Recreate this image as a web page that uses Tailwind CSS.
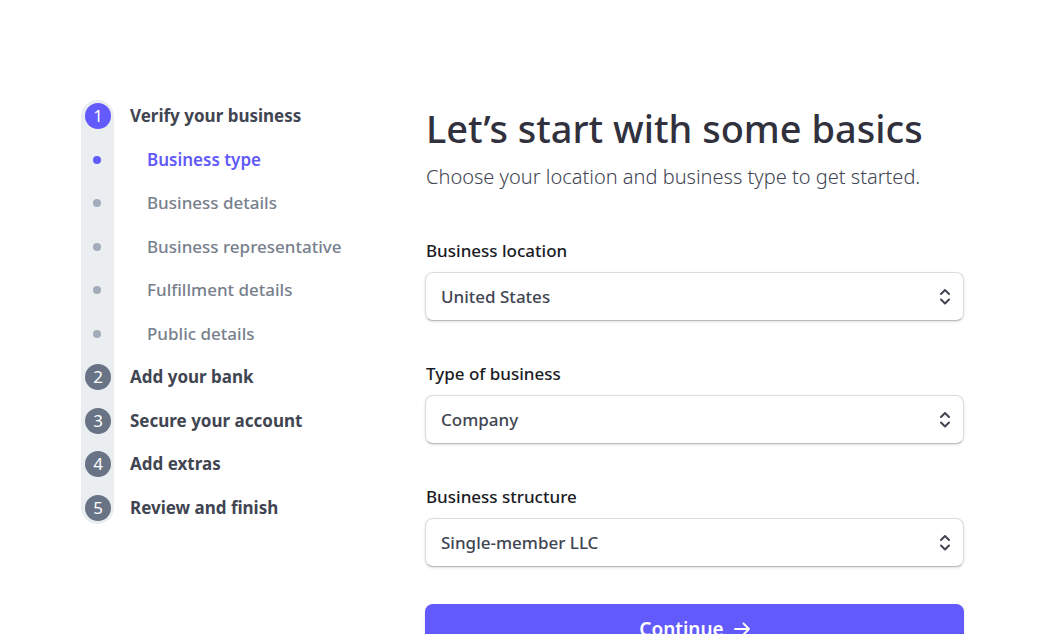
<!DOCTYPE html>
<html lang="en">
<head>
<meta charset="utf-8">
<meta name="viewport" content="width=device-width, initial-scale=1">
<title>Let’s start with some basics</title>
<script src="https://cdn.jsdelivr.net/npm/@tailwindcss/browser@4"></script>
</head>
<body class="bg-white font-['Noto_Sans',sans-serif] text-[#414552]">
<div class="flex items-start pt-[100px] pr-[89px] pb-12 pl-[81px]">
  <nav aria-label="Setup steps" class="w-[344px] shrink-0">
    <ol class="flex h-[424px] w-[33px] flex-col justify-between rounded-[17px] bg-[#ebeef1] py-[3px] text-[17px] leading-[26px] font-bold whitespace-nowrap">
      <li class="flex h-[26px] items-center"><a href="#" class="flex items-center gap-[19px]"><span class="ml-1 flex size-[26px] shrink-0 items-center justify-center rounded-full bg-[#625afa] font-normal text-white">1</span>Verify your business</a></li>
      <li class="flex h-[26px] items-center"><a href="#" aria-current="step" class="flex items-center gap-[46px] font-semibold text-[#625afa]"><span class="ml-3 size-2 shrink-0 rounded-full bg-[#625afa]"></span>Business type</a></li>
      <li class="flex h-[26px] items-center"><a href="#" class="flex items-center gap-[46px] font-medium text-[#77808c]"><span class="ml-3 size-2 shrink-0 rounded-full bg-[#a3acba]"></span>Business details</a></li>
      <li class="flex h-[26px] items-center"><a href="#" class="flex items-center gap-[46px] font-medium text-[#77808c]"><span class="ml-3 size-2 shrink-0 rounded-full bg-[#a3acba]"></span>Business representative</a></li>
      <li class="flex h-[26px] items-center"><a href="#" class="flex items-center gap-[46px] font-medium text-[#77808c]"><span class="ml-3 size-2 shrink-0 rounded-full bg-[#a3acba]"></span>Fulfillment details</a></li>
      <li class="flex h-[26px] items-center"><a href="#" class="flex items-center gap-[46px] font-medium text-[#77808c]"><span class="ml-3 size-2 shrink-0 rounded-full bg-[#a3acba]"></span>Public details</a></li>
      <li class="flex h-[26px] items-center"><a href="#" class="flex items-center gap-[19px]"><span class="ml-1 flex size-[26px] shrink-0 items-center justify-center rounded-full bg-[#687385] font-normal text-white">2</span>Add your bank</a></li>
      <li class="flex h-[26px] items-center"><a href="#" class="flex items-center gap-[19px]"><span class="ml-1 flex size-[26px] shrink-0 items-center justify-center rounded-full bg-[#687385] font-normal text-white">3</span>Secure your account</a></li>
      <li class="flex h-[26px] items-center"><a href="#" class="flex items-center gap-[19px]"><span class="ml-1 flex size-[26px] shrink-0 items-center justify-center rounded-full bg-[#687385] font-normal text-white">4</span>Add extras</a></li>
      <li class="flex h-[26px] items-center"><a href="#" class="flex items-center gap-[19px]"><span class="ml-1 flex size-[26px] shrink-0 items-center justify-center rounded-full bg-[#687385] font-normal text-white">5</span>Review and finish</a></li>
    </ol>
  </nav>

  <main class="min-w-0 flex-1">
    <h1 class="pl-px text-[38px] leading-[56px] font-medium whitespace-nowrap text-[#30313d]">Let’s start with some basics</h1>
    <p class="mt-[7px] pl-px text-xl leading-7 font-light whitespace-nowrap">Choose your location and business type to get started.</p>

    <form class="mt-[47px]">
      <div class="mb-10">
        <label for="location" class="block pb-2 pl-px text-[17px] leading-[26px] font-medium text-[#1a1b25]">Business location</label>
        <div class="grid items-center">
          <select id="location" class="col-start-1 row-start-1 h-[49px] w-full appearance-none rounded-lg border border-[#dcdcde] border-b-[#bbbbbf] bg-white px-[15px] text-[17px] font-medium shadow-sm"><option>United States</option></select>
          <svg class="pointer-events-none col-start-1 row-start-1 mr-3 justify-self-end" width="14" height="18" viewBox="0 0 14 18" fill="none" stroke="#414552" stroke-width="2" stroke-linecap="round" stroke-linejoin="round" aria-hidden="true"><path d="M3 6 7 2l4 4M3 11.5l4 4 4-4"/></svg>
        </div>
      </div>
      <div class="mb-10">
        <label for="type" class="block pb-2 pl-px text-[17px] leading-[26px] font-medium text-[#1a1b25]">Type of business</label>
        <div class="grid items-center">
          <select id="type" class="col-start-1 row-start-1 h-[49px] w-full appearance-none rounded-lg border border-[#dcdcde] border-b-[#bbbbbf] bg-white px-[15px] text-[17px] font-medium shadow-sm"><option>Company</option></select>
          <svg class="pointer-events-none col-start-1 row-start-1 mr-3 justify-self-end" width="14" height="18" viewBox="0 0 14 18" fill="none" stroke="#414552" stroke-width="2" stroke-linecap="round" stroke-linejoin="round" aria-hidden="true"><path d="M3 6 7 2l4 4M3 11.5l4 4 4-4"/></svg>
        </div>
      </div>
      <div class="mb-[37px]">
        <label for="structure" class="block pb-2 pl-px text-[17px] leading-[26px] font-medium text-[#1a1b25]">Business structure</label>
        <div class="grid items-center">
          <select id="structure" class="col-start-1 row-start-1 h-[49px] w-full appearance-none rounded-lg border border-[#dcdcde] border-b-[#bbbbbf] bg-white px-[15px] text-[17px] font-medium shadow-sm"><option>Single-member LLC</option></select>
          <svg class="pointer-events-none col-start-1 row-start-1 mr-3 justify-self-end" width="14" height="18" viewBox="0 0 14 18" fill="none" stroke="#414552" stroke-width="2" stroke-linecap="round" stroke-linejoin="round" aria-hidden="true"><path d="M3 6 7 2l4 4M3 11.5l4 4 4-4"/></svg>
        </div>
      </div>
      <button type="submit" class="flex h-[50px] w-full items-center justify-center gap-[10px] rounded-lg bg-[#625afa] text-[19px] font-semibold text-white shadow-sm">Continue
        <svg width="16" height="16" viewBox="0 0 16 16" fill="none" stroke="currentColor" stroke-width="1.8" stroke-linecap="round" stroke-linejoin="round" aria-hidden="true"><path d="M1 8h14M9.5 2.5 15 8l-5.5 5.5"/></svg>
      </button>
    </form>
  </main>
</div>
</body>
</html>
